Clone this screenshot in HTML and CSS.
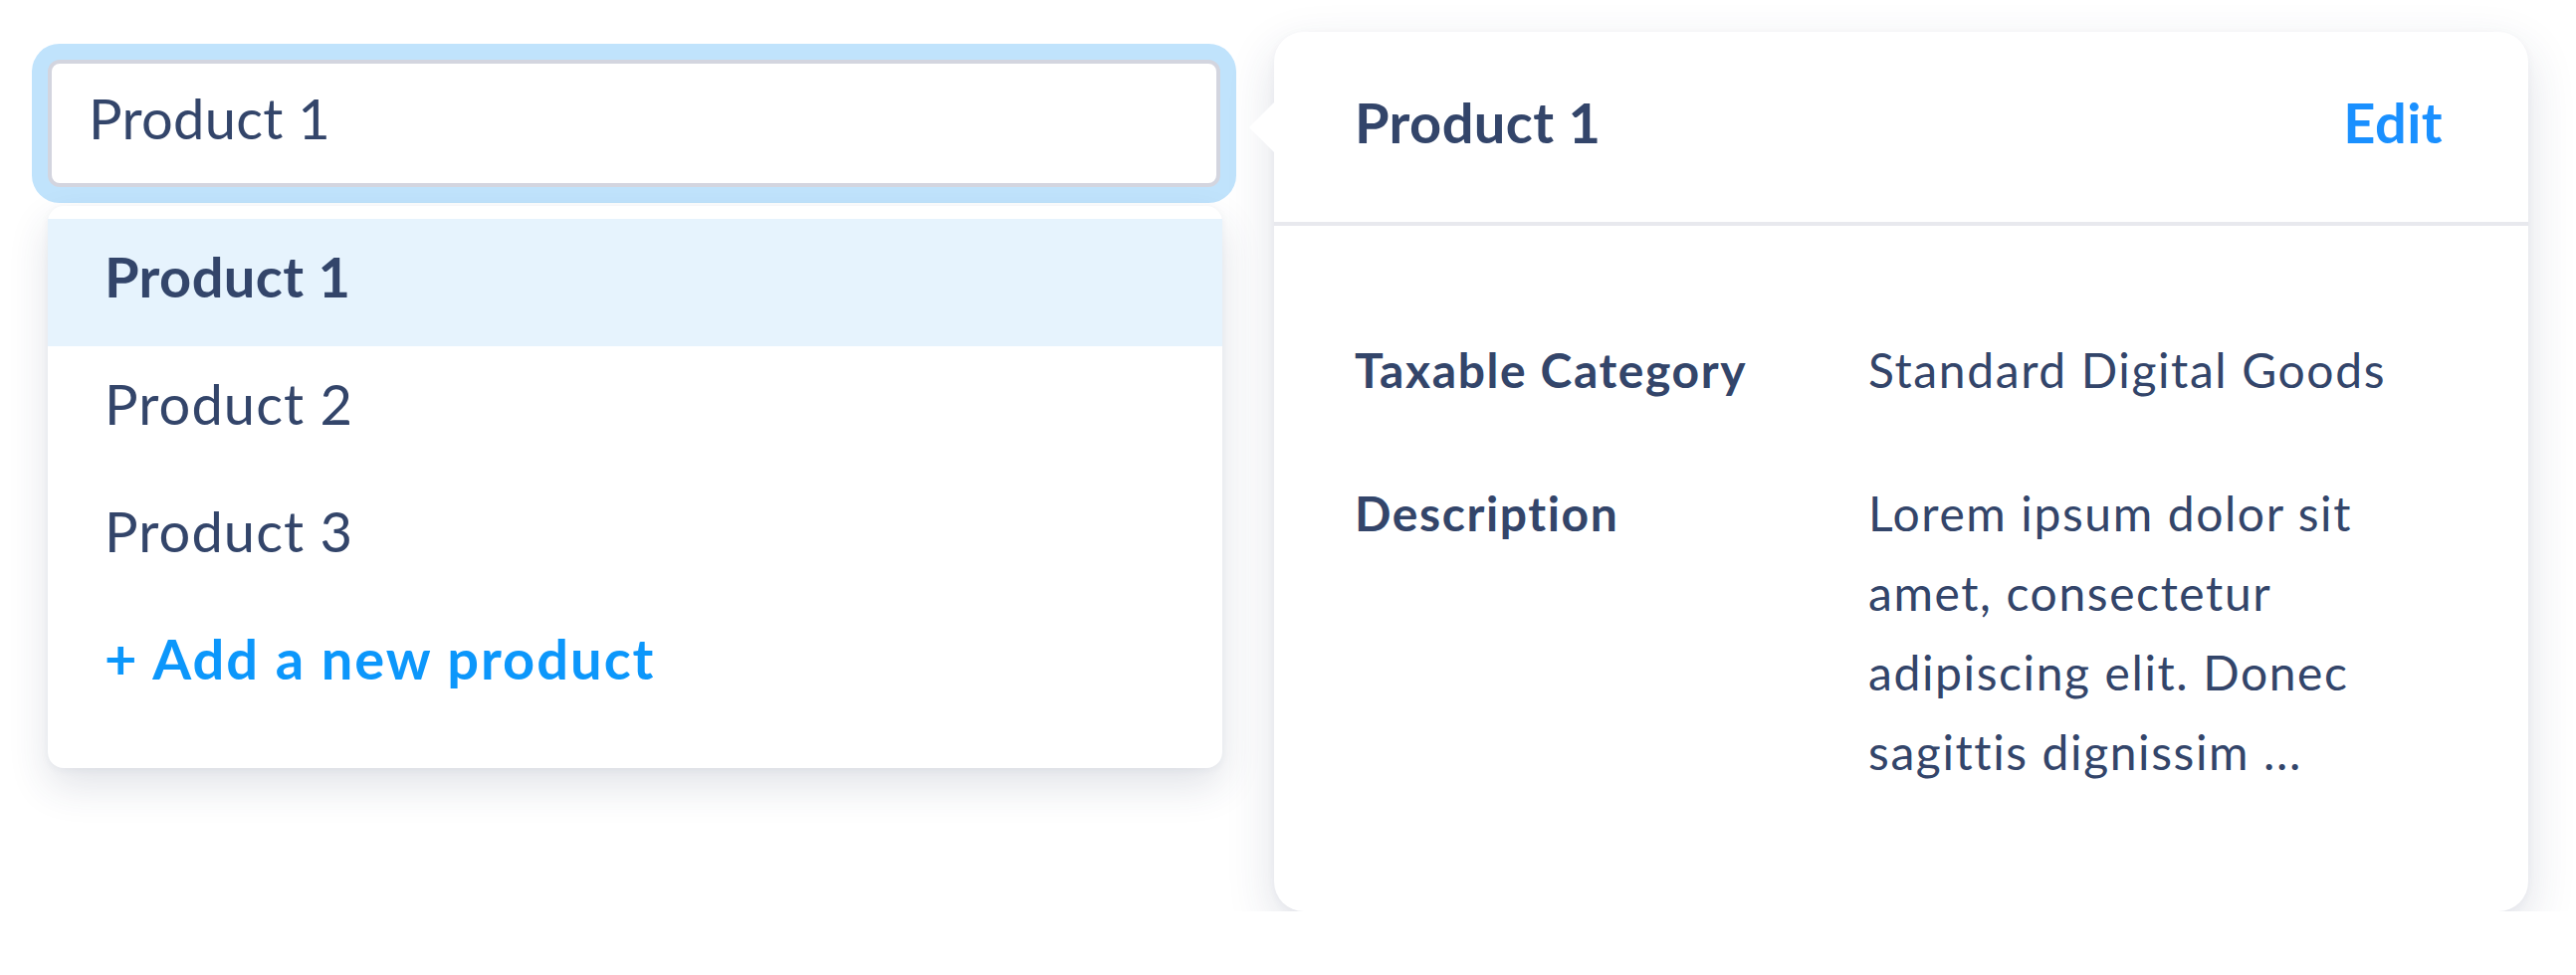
FILE: index.html
```html
<!DOCTYPE html>
<html lang="en">
<head>
<meta charset="utf-8">
<title>Product picker</title>
<link rel="stylesheet" href="styles.css">
</head>
<body>
<div class="page">
  <div class="picker">
    <div class="field">Product 1</div>
    <ul class="menu">
      <li class="option active">Product 1</li>
      <li class="option">Product 2</li>
      <li class="option">Product 3</li>
      <li class="option add">+ Add a new product</li>
    </ul>
  </div>
  <div class="card">
    <div class="card-head">
      <span class="card-title">Product 1</span>
      <a class="card-edit">Edit</a>
    </div>
    <dl class="card-body">
      <div class="row">
        <dt class="label">Taxable Category</dt>
        <dd class="value">Standard Digital Goods</dd>
      </div>
      <div class="row">
        <dt class="label">Description</dt>
        <dd class="value">Lorem ipsum dolor sit<br>amet, consectetur<br>adipiscing elit. Donec<br>sagittis dignissim ...</dd>
      </div>
    </dl>
  </div>
</div>
</body>
</html>
```

FILE: styles.css
```css
* { box-sizing: border-box; }

body {
  margin: 0;
  background: #ffffff;
  font-family: Lato, "Noto Sans", sans-serif;
  color: #33456a;
}

.page {
  display: flex;
  align-items: flex-start;
  padding: 32px 0 0 48px;
}

.picker {
  width: 1180px;
  margin-top: 28px;
  display: flex;
  flex-direction: column;
}

.field {
  width: 1178px;
  height: 128px;
  border: 4px solid #d3d5df;
  border-radius: 12px;
  box-shadow: 0 0 0 16px #c0e3fc;
  background: #fff;
  padding: 0 40px 12px 37px;
  display: flex;
  align-items: center;
  font-size: 56px;
  line-height: 67px;
  letter-spacing: 0.3px;
}

.menu {
  list-style: none;
  margin: 19px 0 0 0;
  padding: 13px 0 40px 0;
  background: #fff;
  border-radius: 16px;
  box-shadow: 0 18px 40px rgba(40, 55, 95, 0.14), 0 2px 8px rgba(40, 55, 95, 0.05);
}

.option {
  height: 128px;
  padding: 0 58px 12px 57px;
  font-size: 56px;
  line-height: 116px;
  letter-spacing: 1.1px;
  white-space: nowrap;
}

.option.active {
  background: #e6f3fd;
  font-weight: 700;
  letter-spacing: 0.4px;
}

.option.add {
  color: #0c97fb;
  font-weight: 700;
  letter-spacing: 2px;
}

.card {
  position: relative;
  width: 1260px;
  height: 884px;
  margin-left: 52px;
  background: #fff;
  border-radius: 30px;
  box-shadow: 0 18px 48px rgba(40, 55, 95, 0.15), 0 2px 10px rgba(40, 55, 95, 0.04);
}

.card::before {
  content: "";
  position: absolute;
  left: -25px;
  top: 71px;
  width: 0;
  height: 0;
  border-top: 25px solid transparent;
  border-bottom: 25px solid transparent;
  border-right: 25px solid #fff;
}

.card-head {
  height: 195px;
  padding: 0 86px 10px 81px;
  border-bottom: 4px solid #e8e9ee;
  display: flex;
  align-items: center;
  justify-content: space-between;
  font-size: 56px;
  line-height: 67px;
  font-weight: 700;
  letter-spacing: 0.4px;
}

.card-edit {
  color: #1a90ff;
  cursor: pointer;
}

.card-body {
  margin: 0;
  padding: 105px 86px 0 81px;
  display: flex;
  flex-direction: column;
  gap: 64px;
}

.row {
  display: flex;
  font-size: 48px;
  line-height: 80px;
  letter-spacing: 1.6px;
}

.label {
  width: 516px;
  flex: none;
  font-weight: 700;
}

.value {
  margin: 0;
}
```
